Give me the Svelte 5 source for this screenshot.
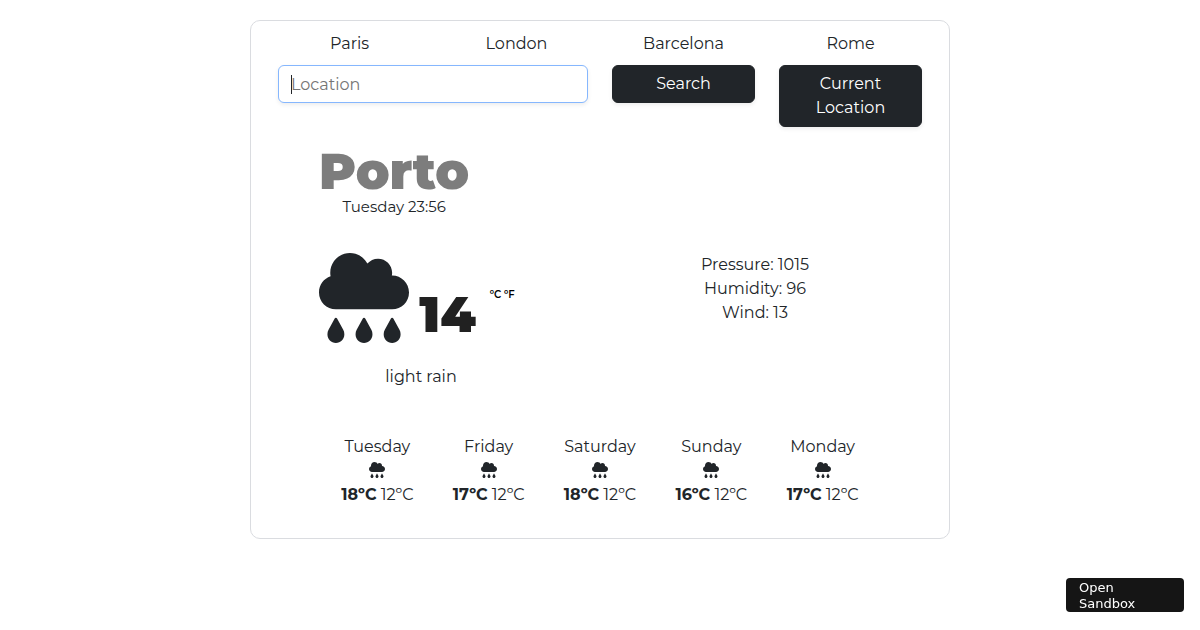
<script>
  const cities = ['Paris', 'London', 'Barcelona', 'Rome'];
  const details = [
    { label: 'Pressure', value: 1015 },
    { label: 'Humidity', value: 96 },
    { label: 'Wind', value: 13 },
  ];
  const forecast = [
    { day: 'Tuesday', high: 18, low: 12 },
    { day: 'Friday', high: 17, low: 12 },
    { day: 'Saturday', high: 18, low: 12 },
    { day: 'Sunday', high: 16, low: 12 },
    { day: 'Monday', high: 17, low: 12 },
  ];
  let query = $state('');
</script>

{#snippet rain()}
  <svg class="rain" viewBox="0 0 512 512" fill="currentColor" aria-hidden="true">
    <path d="M96 320c-53 0-96-43-96-96c0-42.500 27.600-78.600 65.900-91.200C64.700 126.100 64 119.100 64 112C64 50.100 114.100 0 176 0c43.100 0 80.500 24.300 99.200 60c14.700-17.100 36.500-28 60.800-28c44.200 0 80 35.800 80 80c0 5.500-.6 10.800-1.600 16c.5 0 1.100 0 1.600 0c53 0 96 43 96 96s-43 96-96 96H96z" />
    {#each [0, 160, 320] as x}
      <path transform="translate({x} 0)" d="M89.200 372c1.300-2.500 3.900-4 6.800-4s5.400 1.500 6.800 4l35.100 64.600c4.100 7.500 6.200 15.800 6.200 24.300v3c0 26.500-21.500 48-48 48s-48-21.500-48-48v-3c0-8.500 2.100-16.900 6.200-24.300L89.200 372z" />
    {/each}
  </svg>
{/snippet}

<main class="card">
  <nav class="cities">
    {#each cities as city}
      <a href="#{city}">{city}</a>
    {/each}
  </nav>

  <form class="search" onsubmit={(e) => e.preventDefault()}>
    <input type="search" placeholder="Location" aria-label="Location" autocomplete="off" bind:value={query} />
    <button type="submit">Search</button>
    <button type="button">Current Location</button>
  </form>

  <header class="place">
    <h1>Porto</h1>
    <p>Tuesday 23:56</p>
  </header>

  <section class="now">
    <div class="current">
      <div class="reading">
        {@render rain()}
        <strong>14</strong>
        <span class="units"><a href="#celsius">ºC</a> <a href="#fahrenheit">ºF</a></span>
      </div>
      <p>light rain</p>
    </div>
    <ul class="details">
      {#each details as item}
        <li>{item.label}: {item.value}</li>
      {/each}
    </ul>
  </section>

  <section class="forecast">
    {#each forecast as item}
      <div class="day">
        <span>{item.day}</span>
        {@render rain()}
        <span><b>{item.high}ºC</b> {item.low}ºC</span>
      </div>
    {/each}
  </section>
</main>

<button class="sandbox" type="button">Open Sandbox</button>

<style>
  :global(body) {
    background: #fff;
    color: #212529;
    font-family: Montserrat, Inter, sans-serif;
    font-size: 16px;
    line-height: 24px;
  }
  * {
    box-sizing: border-box;
  }
  h1, p, ul {
    margin: 0;
    padding: 0;
  }
  a {
    color: inherit;
    text-decoration: none;
  }
  .card {
    max-width: 700px;
    margin: 20px auto;
    padding: 11px 15px 31px;
    border: 1px solid #dadce0;
    border-radius: 10px;
  }
  .cities {
    display: grid;
    grid-template-columns: repeat(4, 1fr);
    text-align: center;
  }
  .search {
    display: grid;
    grid-template-columns: repeat(4, 1fr);
    align-items: start;
    gap: 24px;
    margin-top: 9px;
    padding: 0 12px;
  }
  .search input,
  .search button {
    min-width: 0;
    margin: 0;
    padding: 6px 12px;
    border: 1px solid #212529;
    border-radius: 6px;
    box-shadow: 0 2px 4px rgba(0, 0, 0, 0.075);
    font: inherit;
  }
  .search input {
    grid-column: span 2;
    height: 38px;
    border-color: #86b7fe;
    outline: 0;
    background: #fff;
    color: #212529;
    appearance: none;
  }
  .search input::placeholder {
    color: #757575;
    opacity: 1;
  }
  /* Resting caret, shown until something is typed. */
  .search input:placeholder-shown {
    background: linear-gradient(#212529, #212529) 12px 9px / 1px 19px no-repeat #fff;
  }
  .search button {
    background: #212529;
    color: #fff;
    cursor: pointer;
  }
  .place {
    width: fit-content;
    margin: 22px 0 0 53px;
    text-align: center;
  }
  .place h1 {
    color: #7d7d7d;
    font-size: 50px;
    font-weight: 900;
    line-height: 46px;
  }
  .place p {
    font-size: 15px;
  }
  .now {
    display: grid;
    grid-template-columns: 1fr 1fr;
    margin: 34px 12px 0 -12px;
    text-align: center;
  }
  .reading {
    display: flex;
    justify-content: center;
    align-items: flex-end;
    height: 90px;
  }
  .reading .rain {
    width: 90px;
    height: 90px;
  }
  .reading strong {
    margin-left: 10px;
    color: #212121;
    font-size: 50px;
    font-weight: 900;
    line-height: 56px;
  }
  .units {
    align-self: flex-start;
    margin: 30px 8px 0 14px;
    color: #000;
    font-size: 10px;
    font-weight: 600;
  }
  .current p {
    margin-top: 22px;
  }
  .details {
    list-style: none;
  }
  .forecast {
    display: flex;
    justify-content: center;
    margin-top: 46px;
  }
  .day {
    display: flex;
    flex: 0 0 calc(100% / 6);
    flex-direction: column;
    align-items: center;
  }
  .day .rain {
    width: 16px;
    height: 16px;
    margin: 3px 0 5px;
  }
  .day b {
    font-weight: 700;
  }
  .sandbox {
    position: fixed;
    right: 16px;
    bottom: 18px;
    width: 118px;
    padding: 2px 13px 0;
    border: 0;
    border-radius: 4px;
    background: #151515;
    color: #fff;
    font-family: "DejaVu Sans", sans-serif;
    font-size: 13px;
    line-height: 16px;
    text-align: left;
    cursor: pointer;
  }
</style>
